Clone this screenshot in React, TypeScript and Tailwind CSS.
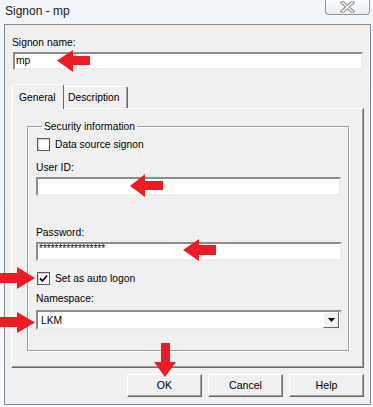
const font = { fontFamily: '"Liberation Sans", Arial, sans-serif' };

function Sunken({ className, children }: { className: string; children?: React.ReactNode }) {
  return (
    <div
      className={`border-2 border-t-[#8c8c8c] border-l-[#8c8c8c] border-b-[#ececec] border-r-[#ececec] bg-white ${className}`}
    >
      {children}
    </div>
  );
}

function Check({ checked }: { checked?: boolean }) {
  return (
    <div className="w-[13px] h-[13px] border border-[#5a5a5a] bg-white shadow-[inset_1px_1px_0_#d4d4d4] flex items-center justify-center">
      {checked && (
        <svg width="9" height="9" viewBox="0 0 9 9">
          <path d="M1 4.5 L3.5 7 L8 1.5" fill="none" stroke="#000" strokeWidth="1.8" />
        </svg>
      )}
    </div>
  );
}

function Btn({ label }: { label: string }) {
  return (
    <div className="w-[75px] h-[23px] border border-t-white border-l-white border-b-[#696969] border-r-[#696969] shadow-[inset_-1px_-1px_0_#a0a0a0] bg-[#f0f0f0] flex items-center justify-center text-[10.6px]">
      {label}
    </div>
  );
}

export default function App() {
  return (
    <div
      className="relative w-[373px] h-[407px] bg-gradient-to-b from-[#f2f6fa] to-[#f8fafc] text-black overflow-hidden"
      style={font}
    >
      {/* title bar */}
      <div className="h-[24px] flex justify-between">
        <div className="pl-[5px] pt-[4px] text-[12px] leading-[15px] text-[#1a1a1a]">Signon - mp</div>
        <div className="mr-[3px] w-[45px] h-[15px] border border-t-0 border-[#8d99a6] rounded-b-[4px] bg-gradient-to-b from-[#fbfcfd] to-[#e9eef3] flex items-center justify-center">
          <svg width="15" height="12" viewBox="0 0 15 12">
            <path d="M2.5 1.5 L12.5 10.5 M12.5 1.5 L2.5 10.5" stroke="#8a8a8a" strokeWidth="3.6" strokeLinecap="square" />
            <path d="M2.5 1.5 L12.5 10.5 M12.5 1.5 L2.5 10.5" stroke="#f6f6f6" strokeWidth="1.6" strokeLinecap="square" />
          </svg>
        </div>
      </div>

      {/* client area */}
      <div className="ml-[4px] w-[367px] h-[381px] border border-[#7e8a96] bg-[#f0f0f0] text-[10.3px] leading-[13px]">
        <div className="pl-[7px] pt-[11px]">Signon name:</div>
        <Sunken className="ml-[8px] mt-[3px] w-[350px] h-[18px] pl-[1px] leading-[14px]">mp</Sunken>

        {/* tabs */}
        <div className="ml-[7px] mt-[14px] flex items-end h-[24px] relative z-10">
          <div className="w-[52px] h-[25px] -mb-[1px] bg-[#f0f0f0] border border-b-0 border-t-white border-l-white border-r-[#696969] rounded-t-[2px] pl-[6px] pt-[6px]">
            General
          </div>
          <div className="w-[64px] h-[22px] border border-b-0 border-t-white border-l-0 border-r-[#696969] shadow-[inset_-1px_0_0_#a0a0a0] rounded-t-[2px] pl-[4px] pt-[4px]">
            Description
          </div>
        </div>
        <div className="ml-[6px] w-[353px] h-[260px] border border-t-white border-l-white border-b-[#696969] border-r-[#696969] shadow-[inset_-1px_-1px_0_#a0a0a0]">
          <fieldset className="ml-[15px] mt-[11px] w-[322px] h-[231px] border border-[#a0a0a0] shadow-[inset_1px_1px_0_#fff,1px_1px_0_#fff] pl-[8px]">
            <legend className="ml-[6px] px-[2px]">Security information</legend>
            <div className="mt-[5px] ml-[1px] flex items-center gap-[5px]">
              <Check />
              <span>Data source signon</span>
            </div>
            <div className="mt-[10px]">User ID:</div>
            <Sunken className="mt-[3px] w-[305px] h-[19px]" />
            <div className="mt-[30px]">Password:</div>
            <Sunken className="mt-[3px] w-[306px] h-[19px] pl-[1px] leading-[9px] text-[10px]">
              *****************
            </Sunken>
            <div className="mt-[11px] ml-[1px] flex items-center gap-[5px]">
              <Check checked />
              <span>Set as auto logon</span>
            </div>
            <div className="mt-[7px]">Namespace:</div>
            <Sunken className="mt-[5px] w-[306px] h-[20px] flex items-center justify-between pl-[3px] pr-[1px]">
              <span>LKM</span>
              <div className="w-[16px] h-[16px] border border-t-white border-l-white border-b-[#696969] border-r-[#696969] bg-[#f0f0f0] flex items-center justify-center">
                <svg width="7" height="4" viewBox="0 0 7 4">
                  <path d="M0 0 H7 L3.5 4 Z" fill="#000" />
                </svg>
              </div>
            </Sunken>
          </fieldset>
        </div>

        <div className="mt-[6px] pr-[6px] flex justify-end gap-[6px]">
          <Btn label="OK" />
          <Btn label="Cancel" />
          <Btn label="Help" />
        </div>
      </div>

      {/* annotation arrows */}
      <svg className="absolute inset-0 pointer-events-none" width="373" height="407" viewBox="0 0 373 407">
        <g fill="#ed1c24">
          <polygon points="57,60.5 73,50 73,56 90,56 90,65 73,65 73,72" />
          <polygon points="130,186 145,174 145,181 163,181 163,190 145,190 145,197" />
          <polygon points="183,250 199,239 199,245 216,245 216,255 199,255 199,261" />
          <polygon points="35,278 17,267 17,273 0,273 0,283 17,283 17,289" />
          <polygon points="35,322.5 17,312 17,317 0,317 0,327 17,327 17,333" />
          <polygon points="165,377 154,362 161,362 161,343 170,343 170,362 176,362" />
        </g>
      </svg>
    </div>
  );
}
